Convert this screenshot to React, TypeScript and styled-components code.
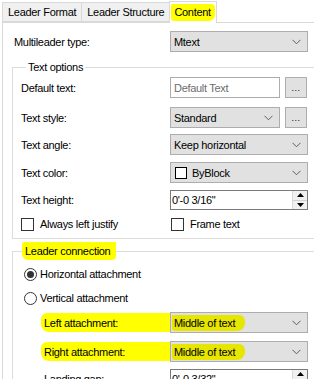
import styled, { createGlobalStyle } from "styled-components";

const GlobalStyle = createGlobalStyle`
  html, body {
    margin: 0;
    padding: 0;
    background: #fff;
  }
  body {
    font-family: "Liberation Sans", Arial, sans-serif;
    font-size: 11px;
    letter-spacing: -0.3px;
    color: #000;
  }
`;

const HL = "#ffff00";

const Screen = styled.div`
  width: 314px;
  height: 379px;
  overflow: hidden;
  background: #fff;
`;

const TabBar = styled.div`
  display: flex;
  align-items: flex-end;
  height: 22px;
  padding-left: 3px;
  box-sizing: border-box;
`;

const Tab = styled.div<{ $active?: boolean }>`
  position: relative;
  box-sizing: border-box;
  height: ${(p) => (p.$active ? "22px" : "20px")};
  padding: 0 ${(p) => (p.$active ? "1px" : "5px")};
  margin-bottom: ${(p) => (p.$active ? "-1px" : "0")};
  border: 1px solid #d9d9d9;
  border-bottom: ${(p) => (p.$active ? "none" : "1px solid #d9d9d9")};
  margin-left: -1px;
  background: ${(p) => (p.$active ? "#fff" : "#f0f0f0")};
  display: flex;
  align-items: center;
  white-space: nowrap;
  z-index: ${(p) => (p.$active ? 1 : 0)};
`;

const TabMark = styled.span`
  background: ${HL};
  border-radius: 2px 4px 6px 3px;
  padding: 2px 4px 3px 3px;
`;

const Panel = styled.div`
  margin-left: 2px;
  width: 360px;
  height: 400px;
  border-left: 1px solid #d9d9d9;
  border-top: 1px solid #d9d9d9;
  box-sizing: border-box;
  padding: 8px 0 0 11px;
`;

const Row = styled.div<{ $h: number; $indent?: number }>`
  display: flex;
  align-items: center;
  height: ${(p) => p.$h}px;
  padding-left: ${(p) => p.$indent ?? 0}px;
`;

const Label = styled.div<{ $w: number; $mark?: boolean }>`
  width: ${(p) => p.$w}px;
  flex: none;
  white-space: nowrap;
  box-sizing: border-box;
  ${(p) =>
    p.$mark &&
    `
    background: ${HL};
    height: 19px;
    display: flex;
    align-items: center;
    padding-left: 3px;
    border-radius: 6px 0 0 8px;
  `}
`;

const Select = styled.div<{ $w: number }>`
  width: ${(p) => p.$w}px;
  height: 21px;
  box-sizing: border-box;
  border: 1px solid #adadad;
  background: #e1e1e1;
  display: flex;
  align-items: center;
  padding: 0 6px 0 3px;
  flex: none;
  position: relative;
`;

const SelectText = styled.span<{ $mark?: boolean }>`
  flex: 1;
  display: flex;
  align-items: center;
  white-space: nowrap;
  & > em {
    font-style: normal;
    ${(p) =>
      p.$mark &&
      `
      background: #e6e600;
      padding: 2px 10px 2px 2px;
      margin-left: -2px;
      border-radius: 0 6px 8px 3px;
    `}
  }
`;

const Chevron = () => (
  <svg width="9" height="6" viewBox="0 0 9 6">
    <path d="M0.5 0.8 L4.5 4.8 L8.5 0.8" fill="none" stroke="#5d5d5d" strokeWidth="1" />
  </svg>
);

const TextInput = styled.div<{ $w: number }>`
  width: ${(p) => p.$w}px;
  height: 21px;
  box-sizing: border-box;
  border: 1px solid #adadad;
  background: #fff;
  color: #6d6d6d;
  display: flex;
  align-items: center;
  padding-left: 3px;
  flex: none;
`;

const DotsButton = styled.div`
  width: 22px;
  height: 21px;
  box-sizing: border-box;
  margin-left: 5px;
  border: 1px solid #adadad;
  background: #e1e1e1;
  display: flex;
  align-items: flex-end;
  justify-content: center;
  padding-bottom: 4px;
  font-size: 9px;
  letter-spacing: 0.5px;
  flex: none;
`;

const Spin = styled.div`
  width: 138px;
  height: 20px;
  box-sizing: border-box;
  border: 1px solid #7a7a7a;
  background: #fff;
  display: flex;
  flex: none;
`;

const SpinValue = styled.div`
  flex: 1;
  display: flex;
  align-items: center;
  padding-left: 1px;
`;

const SpinButtons = styled.div`
  width: 14px;
  display: flex;
  flex-direction: column;
  border-left: 1px solid #d9d9d9;
`;

const SpinHalf = styled.div`
  flex: 1;
  background: #f0f0f0;
  display: flex;
  align-items: center;
  justify-content: center;
  & + & {
    border-top: 1px solid #d0d0d0;
  }
`;

const Swatch = styled.span`
  width: 10px;
  height: 10px;
  border: 1px solid #000;
  background: #fff;
  margin: 0 5px 0 1px;
  flex: none;
`;

const Group = styled.fieldset<{ $top: number; $h: number }>`
  margin: ${(p) => p.$top}px 0 0 -2px;
  padding: 0 0 0 8px;
  border: 1px solid #dcdcdc;
  border-radius: 0;
  width: 360px;
  height: ${(p) => p.$h}px;
  box-sizing: border-box;
`;

const Legend = styled.legend<{ $mark?: boolean }>`
  padding: 0 2px;
  margin-left: 5px;
  line-height: 14px;
  ${(p) =>
    p.$mark &&
    `
    background: ${HL};
    padding: 2px 6px 2px 3px;
    margin-left: 1px;
    border-radius: 2px 0 4px 6px;
  `}
`;

const CheckBox = styled.span`
  width: 13px;
  height: 13px;
  box-sizing: border-box;
  border: 1px solid #333;
  background: #fff;
  margin-right: 6px;
  flex: none;
`;

const CheckCell = styled.div<{ $w?: number }>`
  display: flex;
  align-items: center;
  width: ${(p) => (p.$w ? `${p.$w}px` : "auto")};
  flex: none;
`;

const Radio = styled.span<{ $on?: boolean }>`
  width: 13px;
  height: 13px;
  box-sizing: border-box;
  border: 1px solid #333;
  border-radius: 50%;
  background: #fff;
  margin-right: 3px;
  display: flex;
  align-items: center;
  justify-content: center;
  flex: none;
  &::after {
    content: "";
    width: 7px;
    height: 7px;
    border-radius: 50%;
    background: ${(p) => (p.$on ? "#333" : "transparent")};
  }
`;

const SpinArrows = () => (
  <SpinButtons>
    <SpinHalf>
      <svg width="7" height="4" viewBox="0 0 7 4">
        <path d="M0 4 L3.5 0 L7 4 Z" fill="#000" />
      </svg>
    </SpinHalf>
    <SpinHalf>
      <svg width="7" height="4" viewBox="0 0 7 4">
        <path d="M0 0 L3.5 4 L7 0 Z" fill="#000" />
      </svg>
    </SpinHalf>
  </SpinButtons>
);

const Dropdown = ({ w, text, mark }: { w: number; text: React.ReactNode; mark?: boolean }) => (
  <Select $w={w}>
    <SelectText $mark={mark}>{text}</SelectText>
    <Chevron />
  </Select>
);

export default function App() {
  return (
    <Screen>
      <GlobalStyle />
      <TabBar>
        <Tab>Leader Format</Tab>
        <Tab>Leader Structure</Tab>
        <Tab $active>
          <TabMark>Content</TabMark>
        </Tab>
      </TabBar>
      <Panel>
        <Row $h={21}>
          <Label $w={156}>Multileader type:</Label>
          <Dropdown w={138} text={<em>Mtext</em>} />
        </Row>

        <Group $top={8} $h={179}>
          <Legend>Text options</Legend>
          <Row $h={21} style={{ marginTop: 3 }}>
            <Label $w={149}>Default text:</Label>
            <TextInput $w={110}>Default Text</TextInput>
            <DotsButton>...</DotsButton>
          </Row>
          <Row $h={21} style={{ marginTop: 9 }}>
            <Label $w={149}>Text style:</Label>
            <Dropdown w={110} text={<em>Standard</em>} />
            <DotsButton>...</DotsButton>
          </Row>
          <Row $h={21} style={{ marginTop: 6 }}>
            <Label $w={149}>Text angle:</Label>
            <Dropdown w={138} text={<em>Keep horizontal</em>} />
          </Row>
          <Row $h={21} style={{ marginTop: 7 }}>
            <Label $w={149}>Text color:</Label>
            <Dropdown
              w={138}
              text={
                <>
                  <Swatch />
                  <em>ByBlock</em>
                </>
              }
            />
          </Row>
          <Row $h={20} style={{ marginTop: 7 }}>
            <Label $w={149}>Text height:</Label>
            <Spin>
              <SpinValue>0'-0 3/16"</SpinValue>
              <SpinArrows />
            </Spin>
          </Row>
          <Row $h={14} style={{ marginTop: 7 }}>
            <CheckCell $w={150}>
              <CheckBox />
              Always left justify
            </CheckCell>
            <CheckCell>
              <CheckBox />
              Frame text
            </CheckCell>
          </Row>
        </Group>

        <Group $top={3} $h={160}>
          <Legend $mark>Leader connection</Legend>
          <Row $h={14} $indent={3} style={{ marginTop: 7 }}>
            <Radio $on />
            Horizontal attachment
          </Row>
          <Row $h={14} $indent={3} style={{ marginTop: 10 }}>
            <Radio />
            Vertical attachment
          </Row>
          <Row $h={21} $indent={20} style={{ marginTop: 7 }}>
            <Label $w={129} $mark>
              Left attachment:
            </Label>
            <Dropdown w={138} mark text={<em>Middle of text</em>} />
          </Row>
          <Row $h={21} $indent={20} style={{ marginTop: 8 }}>
            <Label $w={129} $mark>
              Right attachment:
            </Label>
            <Dropdown w={138} mark text={<em>Middle of text</em>} />
          </Row>
          <Row $h={20} $indent={20} style={{ marginTop: 7 }}>
            <Label $w={129} style={{ paddingLeft: 3 }}>
              Landing gap:
            </Label>
            <Spin>
              <SpinValue>0'-0 3/32"</SpinValue>
              <SpinArrows />
            </Spin>
          </Row>
        </Group>
      </Panel>
    </Screen>
  );
}
